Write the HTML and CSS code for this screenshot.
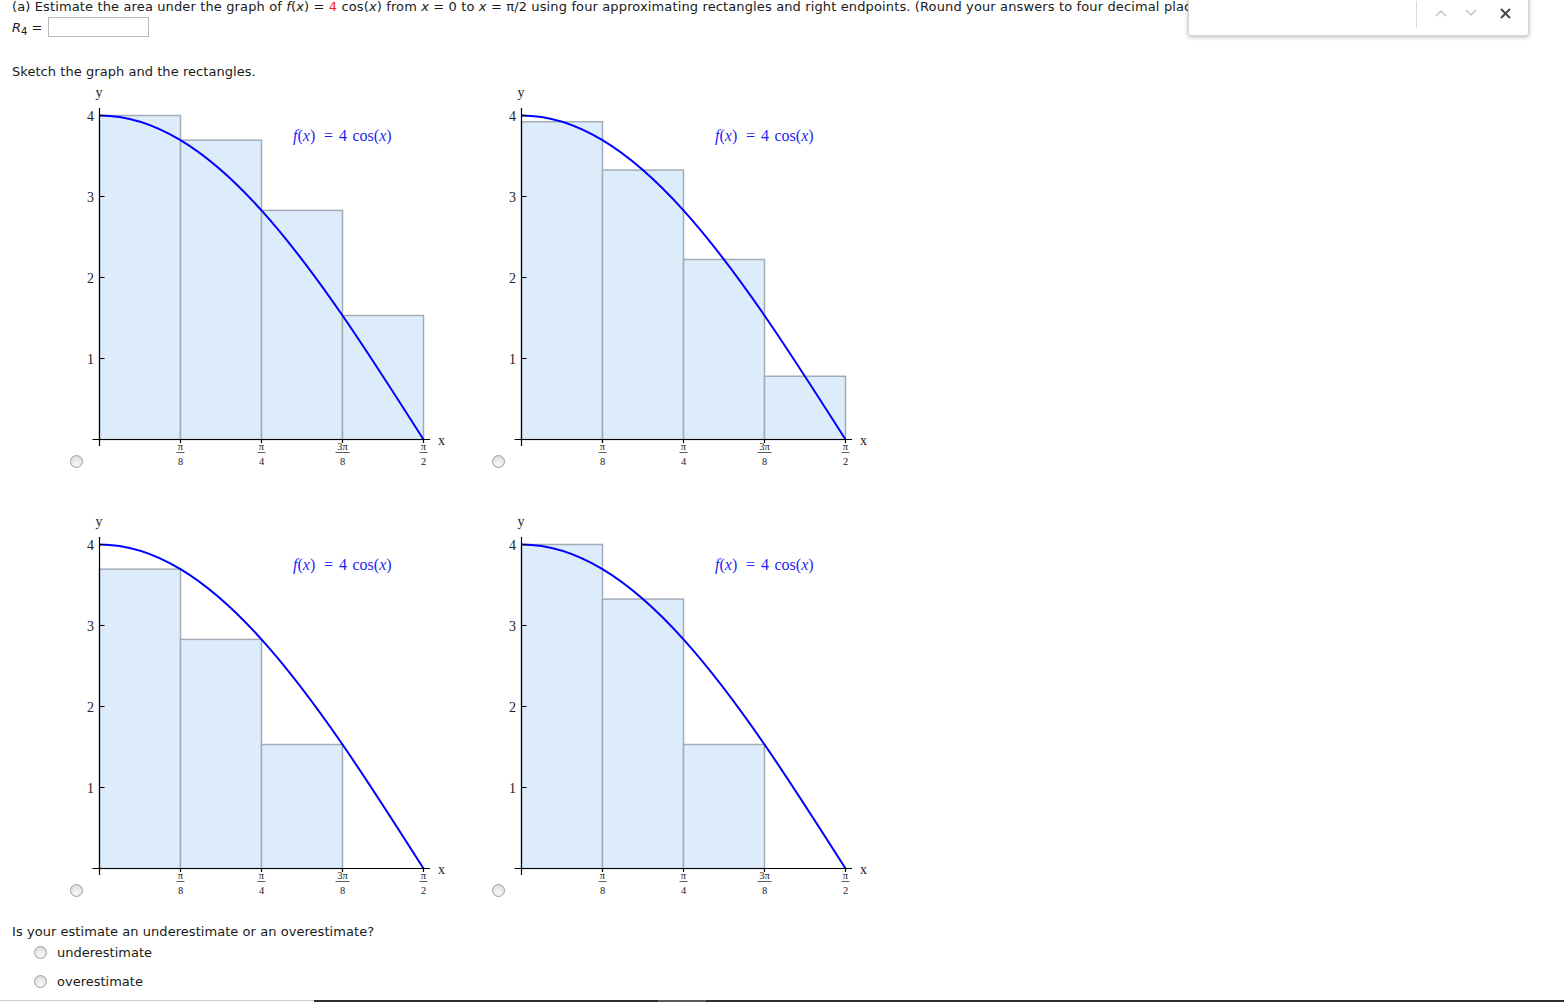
FILE: index.html
```html
<!DOCTYPE html>
<html>
<head>
<meta charset="utf-8">
<title>Riemann sum</title>
<link rel="stylesheet" href="styles.css">
</head>
<body>
<main class="page">
  <p class="line1">(a) Estimate the area under the graph of <i>f</i>(<i>x</i>) = <span class="red">4</span> cos(<i>x</i>) from <i>x</i> = 0 to <i>x</i> = π/2 using four approximating rectangles and right endpoints. (Round your answers to four decimal places.)</p>
  <div class="r4"><span class="r4lbl"><i>R</i><sub>4</sub> =</span><span class="input"></span></div>
  <p class="sketch">Sketch the graph and the rectangles.</p>

  <div class="graphs">
    <div class="cell">
      <span class="radio"></span>
      <svg class="graph" width="370" height="383" viewBox="0 0 370 383">
        <defs>
          <g id="frame">
            <path class="curve" d="M14.5 30.5 C41.5 30.5 68.5 38.93 95.5 55.16 C122.5 71.39 149.5 95.41 176.5 125.4 C203.5 155.39 230.5 191.33 257.5 230.51 C284.5 269.69 311.5 312.09 338.5 354.5"/>
            <path class="axis" d="M7.5 354.5 H345 M14.5 361 V23 M14.5 273.5 H19.5 M14.5 192.5 H19.5 M14.5 111.5 H19.5 M14.5 30.5 H19.5 M95.5 354.5 V358 M176.5 354.5 V358 M257.5 354.5 V358 M338.5 354.5 V358"/>
            <path class="fline" d="M91.5 367.5 H99.5 M172.5 367.5 H180.5 M250.5 367.5 H264.5 M334.5 367.5 H342.5"/>
            <text class="lbl" x="9" y="279" text-anchor="end">1</text>
            <text class="lbl" x="9" y="198" text-anchor="end">2</text>
            <text class="lbl" x="9" y="117" text-anchor="end">3</text>
            <text class="lbl" x="9" y="36" text-anchor="end">4</text>
            <text class="lbl" x="14" y="12" text-anchor="middle">y</text>
            <text class="lbl" x="353" y="360">x</text>
            <text class="frac" x="95.5" y="365" text-anchor="middle">π</text>
            <text class="frac" x="95.5" y="380" text-anchor="middle">8</text>
            <text class="frac" x="176.5" y="365" text-anchor="middle">π</text>
            <text class="frac" x="176.5" y="380" text-anchor="middle">4</text>
            <text class="frac" x="257.5" y="365" text-anchor="middle">3π</text>
            <text class="frac" x="257.5" y="380" text-anchor="middle">8</text>
            <text class="frac" x="338.5" y="365" text-anchor="middle">π</text>
            <text class="frac" x="338.5" y="380" text-anchor="middle">2</text>
            <text class="flabel" y="56"><tspan x="208" class="it">f</tspan>(<tspan class="it">x</tspan>)<tspan x="239">=</tspan><tspan x="254">4</tspan><tspan x="267.5">cos(</tspan><tspan class="it">x</tspan>)</text>
          </g>
        </defs>
        <rect class="bar" x="14.5" y="30.5" width="81" height="324"/>
        <rect class="bar" x="95.5" y="55.16" width="81" height="299.34"/>
        <rect class="bar" x="176.5" y="125.4" width="81" height="229.1"/>
        <rect class="bar" x="257.5" y="230.51" width="81" height="123.99"/>
        <use href="#frame"/>
      </svg>
    </div>

    <div class="cell">
      <span class="radio"></span>
      <svg class="graph" width="370" height="383" viewBox="0 0 370 383">
        <rect class="bar" x="14.5" y="36.72" width="81" height="317.78"/>
        <rect class="bar" x="95.5" y="85.1" width="81" height="269.4"/>
        <rect class="bar" x="176.5" y="174.5" width="81" height="180"/>
        <rect class="bar" x="257.5" y="291.29" width="81" height="63.21"/>
        <use href="#frame"/>
      </svg>
    </div>

    <div class="cell">
      <span class="radio"></span>
      <svg class="graph" width="370" height="383" viewBox="0 0 370 383">
        <rect class="bar" x="14.5" y="55.16" width="81" height="299.34"/>
        <rect class="bar" x="95.5" y="125.4" width="81" height="229.1"/>
        <rect class="bar" x="176.5" y="230.51" width="81" height="123.99"/>
        <use href="#frame"/>
      </svg>
    </div>

    <div class="cell">
      <span class="radio"></span>
      <svg class="graph" width="370" height="383" viewBox="0 0 370 383">
        <rect class="bar" x="14.5" y="30.5" width="81" height="324"/>
        <rect class="bar" x="95.5" y="85.1" width="81" height="269.4"/>
        <rect class="bar" x="176.5" y="230.51" width="81" height="123.99"/>
        <use href="#frame"/>
      </svg>
    </div>
  </div>

  <p class="ask">Is your estimate an underestimate or an overestimate?</p>
  <div class="opt"><span class="radio"></span><span>underestimate</span></div>
  <div class="opt opt2"><span class="radio"></span><span>overestimate</span></div>
</main>

<div class="findbar">
  <div class="find-input"></div>
  <div class="find-sep"></div>
  <div class="fbtn fbtn-up"><svg width="12" height="8" viewBox="0 0 12 8"><polyline points="1,7 6,2 11,7" class="chev"/></svg></div>
  <div class="fbtn"><svg width="12" height="8" viewBox="0 0 12 8"><polyline points="1,1 6,6 11,1" class="chev"/></svg></div>
  <div class="fbtn fbtn-x"><svg width="11" height="11" viewBox="0 0 11 11"><path d="M1 1 L10 10 M10 1 L1 10" class="xmark"/></svg></div>
</div>

<div class="bottombar"><span class="bb-a"></span><span class="bb-b"></span><span class="bb-c"></span><span class="bb-d"></span></div>
</body>
</html>
```

FILE: styles.css
```css
html, body {
  margin: 0;
  padding: 0;
  background: #fff;
}

body {
  font-family: "DejaVu Sans", Verdana, sans-serif;
  font-size: 13px;
  color: #1a1a1a;
  overflow: hidden;
}

.page {
  padding: 0 12px;
}

.line1 {
  margin: -1px 0 0;
  line-height: 16px;
  white-space: nowrap;
  letter-spacing: 0.13px;
}

.red {
  color: #ee2a12;
}

.r4 {
  display: flex;
  align-items: center;
  gap: 6px;
  height: 20px;
  margin-top: 2px;
}

.r4lbl sub {
  font-size: 10px;
  vertical-align: -3px;
  line-height: 0;
}

.input {
  display: block;
  width: 99px;
  height: 18px;
  border: 1px solid #b9b9b9;
  background: #fff;
}

.sketch {
  margin: 27px 0 0;
  line-height: 16px;
  letter-spacing: 0.05px;
}

.graphs {
  display: grid;
  grid-template-columns: 422px 422px;
  row-gap: 46px;
  margin: 5px 0 0 58px;
}

.cell {
  display: flex;
  align-items: flex-end;
  gap: 2px;
}

.graph {
  display: block;
  overflow: visible;
}

.radio {
  display: block;
  flex: none;
  width: 13px;
  height: 13px;
  box-sizing: border-box;
  border-radius: 50%;
  border: 1px solid #a0a0a0;
  background: radial-gradient(circle at 50% 70%, #f9f9f9 0%, #e6e6e6 55%, #cfcfcf 100%);
}

.bar {
  fill: #ddecfb;
  stroke: #a3acb6;
  stroke-width: 1.5;
}

.curve {
  fill: none;
  stroke: #0000ff;
  stroke-width: 2;
  stroke-linejoin: round;
}

.axis {
  fill: none;
  stroke: #000;
  stroke-width: 1.2;
}

.fline {
  fill: none;
  stroke: #333;
  stroke-width: 0.8;
}

.lbl {
  font-family: "Liberation Serif", "DejaVu Serif", serif;
  font-size: 14px;
  fill: #222;
}

.frac {
  font-family: "Liberation Serif", "DejaVu Serif", serif;
  font-size: 10.5px;
  fill: #222;
}

.flabel {
  font-family: "Liberation Serif", "DejaVu Serif", serif;
  font-size: 16px;
  fill: #1f1ff0;
}

.flabel .it {
  font-style: italic;
}

.ask {
  margin: 27px 0 0;
  line-height: 16px;
  letter-spacing: 0.05px;
}

.opt {
  display: flex;
  align-items: center;
  gap: 10px;
  height: 20px;
  margin-top: 2px;
  padding-left: 22px;
}

.opt2 {
  margin-top: 9px;
}

/* browser find bar overlay */
.findbar {
  position: fixed;
  top: -4px;
  right: 35px;
  width: 341px;
  height: 40px;
  box-sizing: border-box;
  padding-top: 4px;
  display: flex;
  align-items: flex-start;
  background: #fff;
  border: 1px solid #d6d6d6;
  border-radius: 0 0 3px 3px;
  box-shadow: 0 1px 4px rgba(0, 0, 0, 0.3);
}

.find-input {
  width: 227px;
  height: 27px;
}

.find-sep {
  width: 1px;
  height: 27px;
  background: #d9d9d9;
}

.fbtn {
  width: 30px;
  height: 24px;
  display: flex;
  align-items: center;
  justify-content: center;
}

.fbtn-up {
  margin-left: 9px;
}

.fbtn-x {
  margin-left: 4px;
}

.chev {
  fill: none;
  stroke: #c2c2c2;
  stroke-width: 1.5;
}

.xmark {
  fill: none;
  stroke: #474747;
  stroke-width: 2;
}

/* bottom strip */
.bottombar {
  position: fixed;
  left: 0;
  right: 0;
  bottom: 0;
  height: 2px;
  display: flex;
}

.bb-a {
  width: 314px;
  height: 1px;
  background: #cdcdcd;
}

.bb-b {
  width: 344px;
  background: #2e2e2e;
}

.bb-c {
  width: 48px;
  background: #5b5b5b;
}

.bb-d {
  flex: 1;
  background: #2e2e2e;
}
```
